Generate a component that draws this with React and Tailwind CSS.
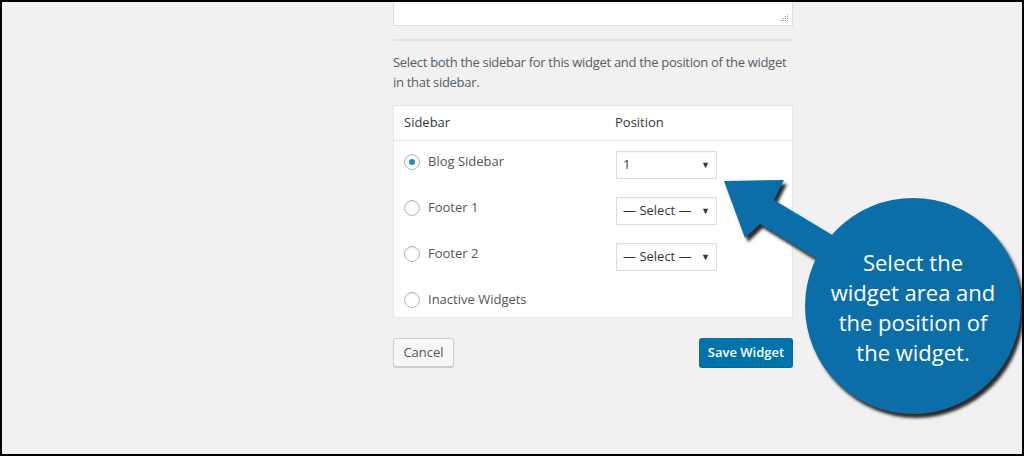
import React from 'react';

const ui = { fontFamily: '"Open Sans", "Noto Sans", sans-serif' };

const rows = [
  { name: 'Blog Sidebar', checked: true, position: '1' },
  { name: 'Footer 1', position: '— Select —' },
  { name: 'Footer 2', position: '— Select —' },
  { name: 'Inactive Widgets' },
];

const Radio = ({ checked }) => (
  <span className="w-4 h-4 rounded-full border border-[#b4b9be] bg-white flex items-center justify-center shadow-[inset_0_1px_2px_rgba(0,0,0,0.1)]">
    {checked && <span className="w-[6px] h-[6px] rounded-full bg-[#1e8cbe]" />}
  </span>
);

const Select = ({ value }) => (
  <div className="w-[101px] h-[28px] border border-[#ddd] bg-white flex items-center justify-between pl-[6px] pr-[6px] text-[13px] text-[#32373c] shadow-[inset_0_1px_2px_rgba(0,0,0,0.04)]">
    <span>{value}</span>
    <span className="text-[9px] text-[#333]">▼</span>
  </div>
);

const Callout = () => (
  <div className="absolute inset-0 pointer-events-none">
    <svg width="1024" height="456" className="absolute left-0 top-0">
      <defs>
        <filter id="soft" x="-20%" y="-20%" width="140%" height="140%">
          <feGaussianBlur stdDeviation="1.5" />
        </filter>
      </defs>
      <g transform="translate(3,4)" fill="#2b2b2b" filter="url(#soft)">
        <circle cx="911" cy="304" r="108" />
        <polygon points="722,179 782,178 772,198 862,252 849,278 758,222 743,236" />
      </g>
      <g fill="#0b6ea8">
        <circle cx="911" cy="304" r="108" />
        <polygon points="722,179 782,178 772,198 862,252 849,278 758,222 743,236" />
      </g>
    </svg>
    <div
      className="absolute left-[803px] top-[195px] w-[216px] h-[218px] flex flex-col items-center justify-center text-white text-[22px] leading-[30px] text-center pt-[2px]"
      style={ui}
    >
      <span>Select the</span>
      <span>widget area and</span>
      <span>the position of</span>
      <span>the widget.</span>
    </div>
  </div>
);

export default function App() {
  return (
    <div className="w-[1024px] h-[456px] border-2 border-black bg-[#f1f1f1] overflow-hidden relative" style={ui}>
      <div className="ml-[391px] w-[400px]">
        {/* textarea (cut off at top) */}
        <div className="relative h-[24px] border border-t-0 border-[#ddd] bg-white">
          <svg width="9" height="9" className="absolute right-[3px] bottom-[3px]" viewBox="0 0 9 9">
            <g fill="#999">
              <rect x="7" y="1" width="1" height="1" />
              <rect x="5" y="3" width="1" height="1" />
              <rect x="7" y="3" width="1" height="1" />
              <rect x="3" y="5" width="1" height="1" />
              <rect x="5" y="5" width="1" height="1" />
              <rect x="7" y="5" width="1" height="1" />
              <rect x="1" y="7" width="1" height="1" />
              <rect x="3" y="7" width="1" height="1" />
              <rect x="5" y="7" width="1" height="1" />
              <rect x="7" y="7" width="1" height="1" />
            </g>
          </svg>
        </div>

        <div className="mt-[13px] h-[2px] bg-[#e2e2e2]" />

        <p className="mt-[11px] text-[13px] leading-[20px] tracking-[-0.3px] text-[#555d66]">
          Select both the sidebar for this widget and the position of the widget in that sidebar.
        </p>

        <div className="mt-[13px] bg-white border border-[#e5e5e5]">
          <div className="h-[35px] flex items-center border-b border-[#e5e5e5] text-[13px] text-[#32373c]">
            <span className="pl-[10px] w-[221px]">Sidebar</span>
            <span>Position</span>
          </div>
          <div className="pt-[8px]">
            {rows.map((r, i) => (
              <div key={r.name} className={`flex items-start ${i === rows.length - 1 ? 'h-[30px]' : 'h-[46px]'}`}>
                <div className="w-[222px] pl-[10px] h-[26px] flex items-center gap-[8px] text-[13px] text-[#555]">
                  <Radio checked={r.checked} />
                  <span>{r.name}</span>
                </div>
                {r.position && (
                  <div className="pt-[2px]">
                    <Select value={r.position} />
                  </div>
                )}
              </div>
            ))}
          </div>
        </div>

        <div className="mt-[20px] flex justify-between">
          <button className="w-[61px] h-[29px] rounded-[3px] border border-[#ccc] bg-[#f7f7f7] text-[13px] text-[#555] shadow-[0_1px_0_#ccc]">
            Cancel
          </button>
          <button className="w-[94px] h-[29px] rounded-[3px] bg-[#0073aa] text-[13px] font-semibold text-white shadow-[0_1px_0_#006799]">
            Save Widget
          </button>
        </div>
      </div>
      <Callout />
    </div>
  );
}
